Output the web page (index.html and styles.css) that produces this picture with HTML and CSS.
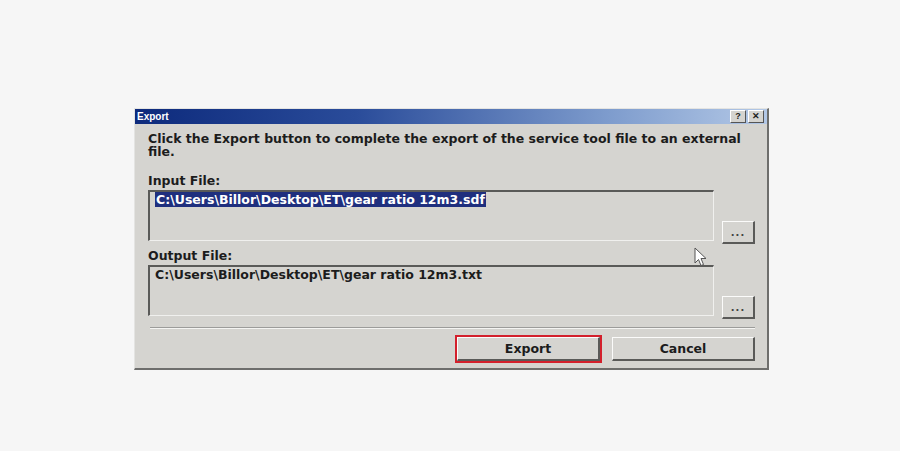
FILE: index.html
```html
<!DOCTYPE html>
<html lang="en">
<head>
    <meta charset="UTF-8">
    <title>Export</title>
    <link rel="stylesheet" href="styles.css">
</head>
<body>
    <div class="dialog">
        <div class="titlebar">
            <span class="title">Export</span>
            <div class="title-buttons">
                <span class="cap-btn">?</span>
                <span class="cap-btn">&#x2715;</span>
            </div>
        </div>

        <div class="dialog-body">
            <p class="intro">Click the Export button to complete the export of the service tool file to an external file.</p>

            <label class="field-label">Input File:</label>
            <div class="field-row">
                <div class="file-box"><span class="selected">C:\Users\Billor\Desktop\ET\gear ratio 12m3.sdf</span></div>
                <button class="btn browse">...</button>
            </div>

            <label class="field-label">Output File:</label>
            <div class="field-row">
                <div class="file-box"><span class="path">C:\Users\Billor\Desktop\ET\gear ratio 12m3.txt</span></div>
                <button class="btn browse">...</button>
            </div>

            <div class="separator"></div>

            <div class="actions">
                <button class="btn action focused">Export</button>
                <button class="btn action">Cancel</button>
            </div>

            <!-- mouse pointer resting over the dialog -->
            <svg class="pointer" width="14" height="20" viewBox="0 0 14 20">
                <path d="M1 1 L1 16 L4.5 12.5 L7 18.5 L9.5 17.5 L7 11.5 L12 11.5 Z" fill="#fff" stroke="#555" stroke-width="1"/>
            </svg>
        </div>
    </div>
</body>
</html>
```

FILE: styles.css
```css
body {
    margin: 0;
    background: #f6f6f6;
    font-family: 'DejaVu Sans', Verdana, sans-serif;
}

/* Classic Windows dialog frame */
.dialog {
    width: 632px;
    margin: 108px 0 0 134px;
    background: #d5d4d0;
    border-left: 1px solid #e4e4e2;
    border-top: 1px solid #e4e4e2;
    border-right: 2px solid #6e6e6c;
    border-bottom: 2px solid #6e6e6c;
}

.titlebar {
    height: 15px;
    display: flex;
    align-items: center;
    justify-content: space-between;
    padding: 0 3px 0 2px;
    background: linear-gradient(to right, #0d2a7c 0%, #2a4c9a 35%, #7e9ccd 75%, #b3c8e6 100%);
}

.title {
    color: #fff;
    font-family: 'Liberation Sans', Arial, sans-serif;
    font-size: 10px;
    font-weight: bold;
}

.title-buttons {
    display: flex;
    gap: 2px;
}

.cap-btn {
    width: 14px;
    height: 11px;
    display: flex;
    align-items: center;
    justify-content: center;
    background: #d5d4d0;
    border-left: 1px solid #fff;
    border-top: 1px solid #fff;
    border-right: 1px solid #555;
    border-bottom: 1px solid #555;
    font-family: 'Liberation Sans', Arial, sans-serif;
    font-size: 9px;
    font-weight: bold;
    color: #222;
    line-height: 1;
}

.dialog-body {
    position: relative;
    padding: 8px 12px 7px 13px;
}

.intro {
    margin: 0 0 16px;
    font-size: 12.5px;
    font-weight: bold;
    line-height: 13px;
    color: #1c1c1c;
}

.field-label {
    display: block;
    font-size: 12.5px;
    font-weight: bold;
    color: #1c1c1c;
    line-height: 14px;
    margin-bottom: 2px;
}

.field-row {
    display: grid;
    grid-template-columns: 1fr 33px;
    column-gap: 8px;
    align-items: end;
    margin-bottom: 5px;
}

.file-box {
    box-sizing: border-box;
    height: 51px;
    margin-bottom: 3px;
    padding: 1px 5px;
    border-left: 2px solid #5a5a58;
    border-top: 2px solid #5a5a58;
    border-right: 1px solid #f0f0ee;
    border-bottom: 1px solid #f0f0ee;
    font-size: 12.5px;
    font-weight: bold;
    color: #1c1c1c;
    line-height: 14px;
}

.selected {
    background: #1f2f7e;
    color: #fff;
    padding: 0 1px;
}

.btn {
    box-sizing: border-box;
    font-family: inherit;
    background: #d5d4d0;
    border-left: 1px solid #fbfbfa;
    border-top: 1px solid #fbfbfa;
    border-right: 2px solid #5a5a58;
    border-bottom: 2px solid #5a5a58;
    color: #1c1c1c;
    padding: 0;
}

.browse {
    height: 23px;
    font-size: 10px;
    font-weight: bold;
    letter-spacing: 1px;
    color: #444;
}

.separator {
    height: 0;
    border-top: 1px solid #9c9c9a;
    border-bottom: 1px solid #f4f4f2;
    margin: 8px 0 8px 2px;
}

.actions {
    display: flex;
    justify-content: flex-end;
    gap: 12px;
}

.action {
    width: 143px;
    height: 24px;
    font-size: 12.5px;
    font-weight: bold;
}

.action.focused {
    outline: 2px solid #d3202c;
    outline-offset: 0;
}

.pointer {
    position: absolute;
    left: 559px;
    top: 123px;
}
```
